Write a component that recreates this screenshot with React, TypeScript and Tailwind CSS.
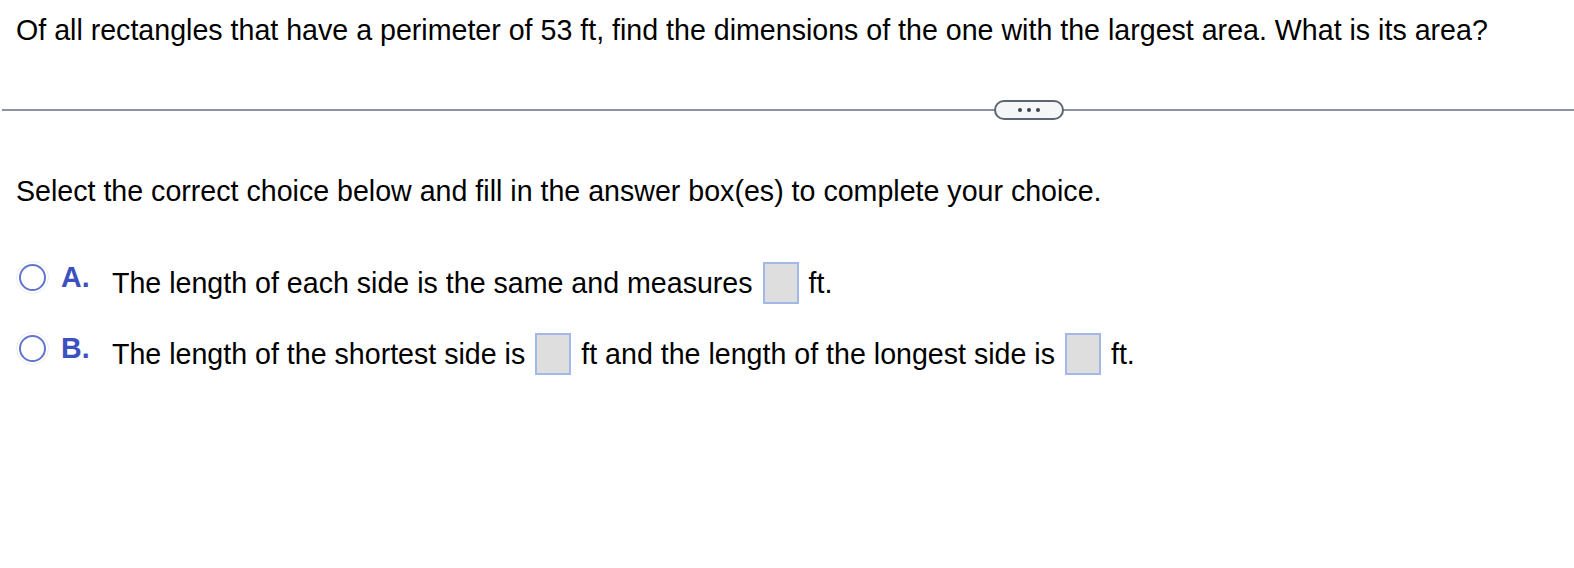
import React from "react";

function Radio() {
  return (
    <div className="relative w-[27px] h-[27px] shrink-0">
      <div className="absolute -inset-[3px] rounded-full border border-[#eeeeee]" />
      <div className="absolute inset-0 rounded-full border-[2.5px] border-[#6275cf] bg-white" />
    </div>
  );
}

function Box() {
  return <span className="inline-block w-[36px] h-[42px] border-2 border-[#a3b8e6] bg-[#dedede] mx-[10px] shrink-0" />;
}

export default function App() {
  return (
    <div className="w-[1574px] h-[568px] bg-white text-black font-['Liberation_Sans',Arial,sans-serif] text-[28.6px] leading-[32px]">
      <p className="pl-[16px] pt-[14px] whitespace-nowrap">
        Of all rectangles that have a perimeter of 53 ft, find the dimensions of the one with the largest area. What is its area?
      </p>
      <div className="relative mt-[63px] ml-[2px] h-[2px] bg-[#8a93a3]">
        <div className="absolute left-[992px] top-[-9px] w-[70px] h-[20px] rounded-full border-2 border-[#5c6670] bg-[#f5f6f8] flex items-center justify-center gap-[5px]">
          <span className="w-[4px] h-[4px] rounded-full bg-[#3d4450]" />
          <span className="w-[4px] h-[4px] rounded-full bg-[#3d4450]" />
          <span className="w-[4px] h-[4px] rounded-full bg-[#3d4450]" />
        </div>
      </div>
      <p className="pl-[16px] mt-[64px] whitespace-nowrap">
        Select the correct choice below and fill in the answer box(es) to complete your choice.
      </p>
      <div className="mt-[55px] pl-[19px] flex flex-col gap-[29px]">
        <div className="flex items-center h-[42px]">
          <div className="flex items-center gap-[15px] -mt-[12px]">
            <Radio />
            <span className="font-bold text-[#3d50c0] w-[37px]">A.</span>
          </div>
          <span className="ml-[14px] whitespace-nowrap">The length of each side is the same and measures</span>
          <Box />
          <span>ft.</span>
        </div>
        <div className="flex items-center h-[42px]">
          <div className="flex items-center gap-[15px] -mt-[12px]">
            <Radio />
            <span className="font-bold text-[#3d50c0] w-[37px]">B.</span>
          </div>
          <span className="ml-[14px] whitespace-nowrap">The length of the shortest side is</span>
          <Box />
          <span className="whitespace-nowrap">ft and the length of the longest side is</span>
          <Box />
          <span>ft.</span>
        </div>
      </div>
    </div>
  );
}
